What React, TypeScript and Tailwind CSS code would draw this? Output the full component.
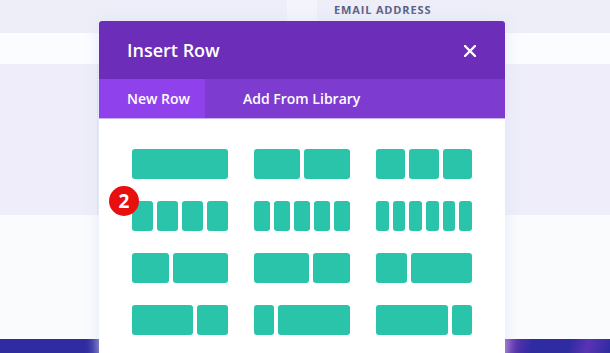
import React from "react";

// Each layout is a list of column flex weights
const layouts: number[][] = [
  [1],
  [1, 1],
  [1, 1, 1],
  [1, 1, 1, 1],
  [1, 1, 1, 1, 1],
  [1, 1, 1, 1, 1, 1],
  [2, 3],
  [3, 2],
  [1, 2],
  [2, 1],
  [1, 3.5],
  [3.5, 1],
];

const RowLayout: React.FC<{ cols: number[] }> = ({ cols }) => (
  <div className="flex gap-[4px] w-[96px] h-[30px]">
    {cols.map((c, i) => (
      <div
        key={i}
        className="h-full rounded-[3px] bg-[#29c4a9] basis-0"
        style={{ flexGrow: c }}
      />
    ))}
  </div>
);

const App: React.FC = () => {
  return (
    <div className="relative w-[610px] h-[353px] overflow-hidden font-['Open_Sans',sans-serif] bg-[#fafbfe]">
      {/* page behind the modal */}
      <div className="h-[33px] bg-[#edeef8] flex">
        <div className="ml-[287px] w-[30px] h-full bg-[#f4f5fb]" />
        <div className="ml-[17px] pt-[3px] text-[11px] font-bold tracking-[0.85px] text-[#565c83] leading-[14px]">
          EMAIL ADDRESS
        </div>
      </div>
      <div className="h-[31px] bg-[#fbfcff]" />
      <div className="h-[151px] bg-[#eeedf9]">
        <div className="ml-[97px] h-full border-l border-dotted border-[#c9cbe6]" />
      </div>
      <div className="h-[124px] bg-[#fafbfd]" />
      <div className="h-[14px] bg-[linear-gradient(105deg,#2f2ba0_0%,#2f2ba0_82%,#6b34b1_83%,#2f2ba0_87%,#2f2ba0_93%,#5a33b5_96%,#2f2ba0_100%)]" />

      {/* modal */}
      <div className="absolute left-[99px] top-[21px] w-[406px] h-[340px] bg-white rounded-t-[3px] shadow-[0_0_14px_rgba(225,228,248,0.9)]">
        <div className="h-[58px] bg-[#6c2eb9] rounded-t-[3px] flex items-center justify-between pl-[28px] pr-[29px]">
          <span className="text-white text-[18px] font-semibold leading-none">Insert Row</span>
          <svg width="12" height="12" viewBox="0 0 12 12" className="mt-[1px]">
            <path d="M1 1L11 11M11 1L1 11" stroke="white" strokeWidth="2.4" strokeLinecap="round" />
          </svg>
        </div>
        <div className="h-[40px] bg-[#7e3bd0] flex border-b border-[#c8b2f0] text-white text-[14px] font-semibold">
          <div className="w-[106px] h-full bg-[#8f42ec] flex items-center pl-[28px]">New Row</div>
          <div className="h-full flex items-center pl-[38px]">Add From Library</div>
        </div>
        <div className="relative pt-[30px] px-[33px] grid grid-cols-3 gap-x-[26px] gap-y-[22px]">
          {layouts.map((l, i) => (
            <RowLayout key={i} cols={l} />
          ))}
          <div className="absolute left-[10px] top-[67px] w-[30px] h-[30px] rounded-full bg-[#e80f0f] flex items-center justify-center text-white text-[19px] font-bold leading-none">
            2
          </div>
        </div>
      </div>
    </div>
  );
};

export default App;
